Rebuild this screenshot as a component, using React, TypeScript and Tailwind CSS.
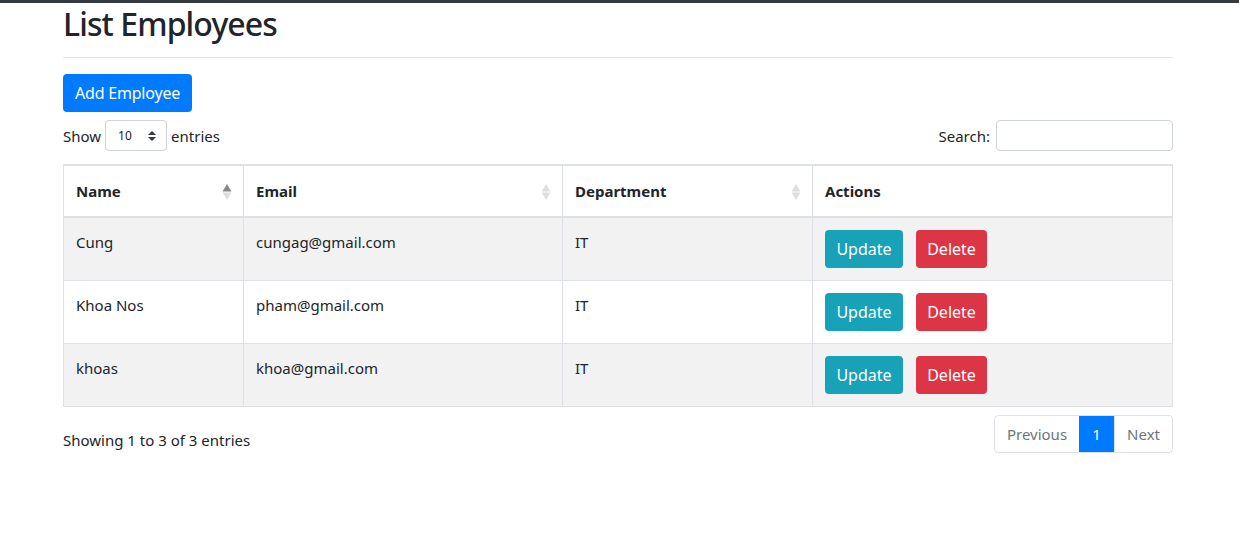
import React from "react";

const employees = [
  { name: "Cung", email: "cungag@gmail.com", department: "IT" },
  { name: "Khoa Nos", email: "pham@gmail.com", department: "IT" },
  { name: "khoas", email: "khoa@gmail.com", department: "IT" },
];

function SortIcon({ active }: { active?: boolean }) {
  return (
    <svg width="10" height="18" viewBox="0 0 10 18" className="absolute right-[11px] top-[17px]">
      <path d="M5 1 L9.5 8.5 H0.5 Z" fill={active ? "#888888" : "#dedede"} />
      <path d="M5 17 L9.5 9.5 H0.5 Z" fill="#dedede" />
    </svg>
  );
}

const th =
  "relative border-r border-[#dee2e6] border-b-2 border-b-[#dee2e6] px-3 py-[13px] text-left font-bold align-bottom leading-6";
const td = "border-r border-b border-[#dee2e6] px-3 py-3 align-top leading-6";

export default function App() {
  return (
    <div className="min-h-[557px] bg-white text-[#212529] font-['Noto_Sans',sans-serif] text-base">
      <div className="h-[3px] bg-[#343a40]" />
      <div className="ml-[63px] w-[1110px]">
        <h2 className="mt-[2px] mb-0 text-[32px] font-medium leading-[1.2] tracking-[-0.9px]">List Employees</h2>
        <hr className="mt-[14px] mb-4 border-t border-[#e5e5e5]" />
        <button className="h-[38px] rounded bg-[#007bff] px-3 text-white leading-6 tracking-[-0.2px]">Add Employee</button>
        <div className="mt-[8px] flex items-center justify-between">
          <div className="flex items-center gap-[4px]">
            <span className="text-[15px]">Show</span>
            <div className="flex h-[31px] w-[62px] items-center justify-between rounded border border-[#ced4da] pl-3 pr-[10px] text-[12px]">
              <span>10</span>
              <svg width="8" height="10" viewBox="0 0 8 10">
                <path d="M4 0 L8 4 H0 Z M4 10 L8 6 H0 Z" fill="#343a40" />
              </svg>
            </div>
            <span className="text-[15px]">entries</span>
          </div>
          <div className="flex items-center gap-[6px]">
            <span className="text-[15px]">Search:</span>
            <div className="h-[31px] w-[177px] rounded border border-[#ced4da]" />
          </div>
        </div>
        <table className="mt-[13px] w-full border-collapse border-l border-t-2 border-[#dee2e6] text-[15px]">
          <thead>
            <tr>
              <th className={`${th} w-[180px]`}>
                Name
                <SortIcon active />
              </th>
              <th className={`${th} w-[319px]`}>
                Email
                <SortIcon />
              </th>
              <th className={`${th} w-[250px]`}>
                Department
                <SortIcon />
              </th>
              <th className={th}>Actions</th>
            </tr>
          </thead>
          <tbody>
            {employees.map((e, i) => (
              <tr key={e.email} className={i % 2 === 0 ? "bg-[#f2f2f2]" : "bg-white"}>
                <td className={td}>{e.name}</td>
                <td className={td}>{e.email}</td>
                <td className={td}>{e.department}</td>
                <td className={td}>
                  <div className="flex gap-[13px]">
                    <button className="h-[38px] w-[78px] rounded bg-[#17a2b8] text-base text-white">Update</button>
                    <button className="h-[38px] w-[71px] rounded bg-[#dc3545] text-base text-white">Delete</button>
                  </div>
                </td>
              </tr>
            ))}
          </tbody>
        </table>
        <div className="mt-[8px] flex items-start justify-between">
          <div className="pt-[14px] text-[15px]">Showing 1 to 3 of 3 entries</div>
          <div className="flex h-[38px] overflow-hidden rounded border border-[#dee2e6] text-[15px]">
            <span className="flex items-center px-3 text-[#6c757d]">Previous</span>
            <span className="flex w-[35px] items-center justify-center bg-[#007bff] text-white">1</span>
            <span className="flex items-center border-l border-[#dee2e6] px-3 text-[#6c757d]">Next</span>
          </div>
        </div>
      </div>
    </div>
  );
}
